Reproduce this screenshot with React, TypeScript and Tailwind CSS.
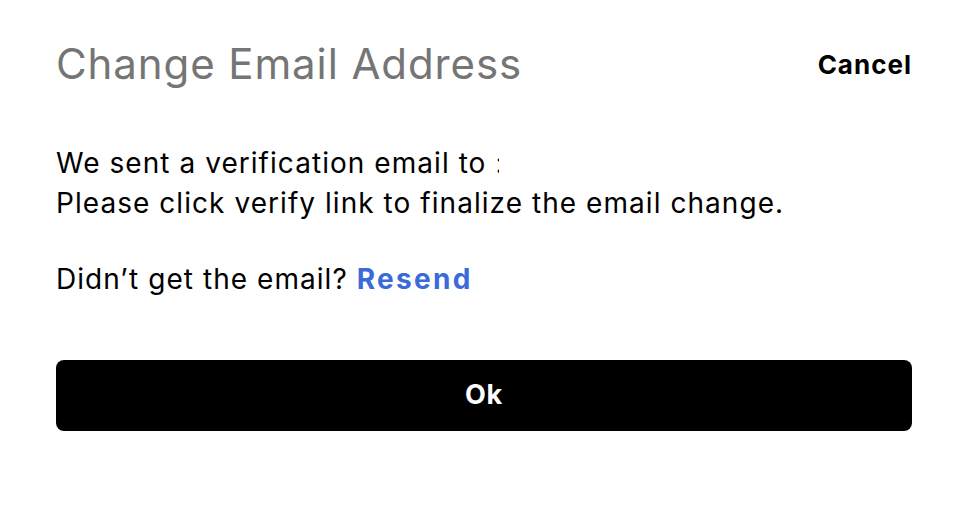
import React from 'react';

const App = () => {
  return (
    <div className="w-[960px] h-[522px] bg-white pl-[56px] pr-[48px] pt-[36px] font-['Inter','Liberation_Sans',sans-serif]">
      <div className="flex items-center justify-between">
        <h1 className="text-[42px] leading-[56px] text-[#757575] tracking-[0.9px]">Change Email Address</h1>
        <button className="text-[26px] font-bold text-black tracking-[1px]">Cancel</button>
      </div>
      <div className="mt-[51px] text-[28px] leading-[40px] text-black tracking-[1.05px]">
        <p>
          We sent a verification email to{' '}
          <span className="inline-block w-[4px] overflow-hidden align-bottom">:</span>
        </p>
        <p>Please click verify link to finalize the email change.</p>
        <p className="mt-[36px]">
          Didn’t get the email?{' '}
          <a className="font-bold text-[#3b6ad9] cursor-pointer tracking-[2.3px]">Resend</a>
        </p>
      </div>
      <button className="mt-[61px] w-full h-[71px] rounded-[8px] bg-black text-white text-[27px] font-bold tracking-[0.8px]">
        Ok
      </button>
    </div>
  );
};

export default App;
